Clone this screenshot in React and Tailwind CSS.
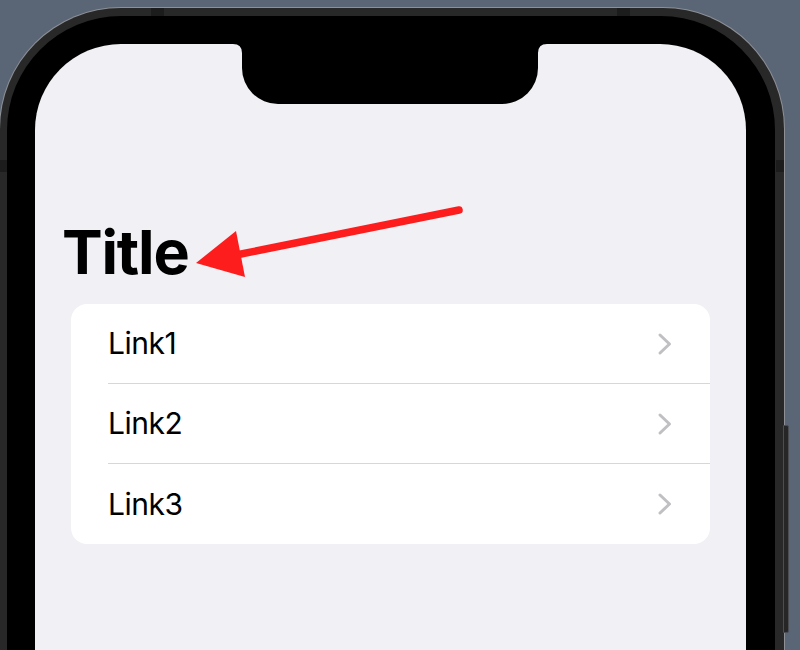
import React from "react";

const links = ["Link1", "Link2", "Link3"];

function Chevron() {
  return (
    <svg width="16" height="24" viewBox="0 0 16 24" fill="none">
      <path
        d="M3 3 L12.5 12 L3 21"
        stroke="#c0c0c4"
        strokeWidth="3"
        strokeLinecap="round"
        strokeLinejoin="round"
      />
    </svg>
  );
}

// Camera housing cut into the top of the display
function Notch() {
  return (
    <svg
      className="absolute left-0 top-0"
      width="710"
      height="70"
      viewBox="0 0 710 70"
    >
      <path
        d="M198 0 Q207 0 207 9 L207 24 A36 36 0 0 0 243 60 L467 60 A36 36 0 0 0 503 24 L503 9 Q503 0 512 0 Z"
        fill="#000"
      />
    </svg>
  );
}

function Arrow() {
  return (
    <svg
      className="absolute left-0 top-0 pointer-events-none"
      width="800"
      height="650"
      viewBox="0 0 800 650"
    >
      <line
        x1="459"
        y1="210"
        x2="236"
        y2="255"
        stroke="#fd1d1d"
        strokeWidth="7.5"
        strokeLinecap="round"
      />
      <polygon points="196,263 236,231 245,277" fill="#fd1d1d" />
    </svg>
  );
}

export default function App() {
  return (
    <div
      className="relative w-[800px] h-[650px] overflow-hidden bg-[#5a6576]"
      style={{ fontFamily: "Inter, 'Noto Sans', sans-serif" }}
    >
      {/* phone body */}
      <div className="ml-[-1px] mt-[7px] w-[786px] h-[820px] rounded-[122px] bg-[#8d9095] p-px">
        <div className="h-full rounded-[121px] bg-[#282828] pl-[7px] pr-[9px] pt-[8px]">
          <div className="h-full rounded-[114px] bg-black pl-[28px] pr-[29px] pt-[28px]">
            <div className="relative h-full rounded-[86px] bg-[#f0f0f5] pt-[178px]">
              <Notch />
              <h1 className="pl-[27px] text-[61px] leading-none font-bold tracking-[-0.02em] text-black">
                Title
              </h1>
              <div className="mx-[36px] mt-[21px] rounded-[16px] bg-white">
                {links.map((label, i) => (
                  <div key={label} className="pl-[37px]">
                    <div
                      className={
                        "flex h-[80px] items-center justify-between pr-[37px] " +
                        (i < links.length - 1 ? "border-b border-[#d7d7db]" : "")
                      }
                    >
                      <span className="text-[30px] tracking-[-0.015em] text-black">
                        {label}
                      </span>
                      <Chevron />
                    </div>
                  </div>
                ))}
              </div>
            </div>
          </div>
        </div>
      </div>

      {/* side button */}
      <div className="absolute left-[783px] top-[425px] h-[208px] w-[6px] rounded-r-[2px] border border-[#4a4d52] bg-[#262626]" />

      {/* antenna breaks */}
      <div className="absolute left-[151px] top-[8px] h-[8px] w-[13px] bg-[#1c1c1c]" />
      <div className="absolute left-[617px] top-[8px] h-[8px] w-[13px] bg-[#1c1c1c]" />
      <div className="absolute left-0 top-[160px] h-[12px] w-[7px] bg-[#1c1c1c]" />
      <div className="absolute left-[776px] top-[160px] h-[12px] w-[8px] bg-[#1c1c1c]" />

      <Arrow />
    </div>
  );
}
